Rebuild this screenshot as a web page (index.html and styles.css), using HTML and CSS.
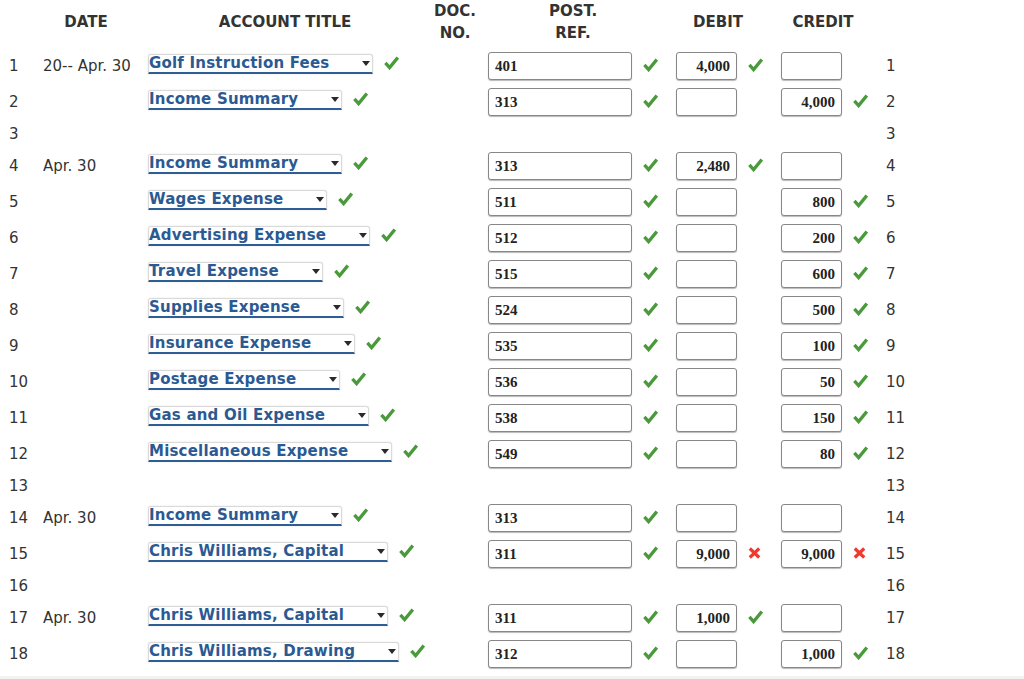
FILE: index.html
```html
<!DOCTYPE html>
<html>
<head>
<meta charset="utf-8">
<link rel="stylesheet" href="styles.css">
</head>
<body>
<svg width="0" height="0" class="defs">
  <defs>
    <symbol id="ok" viewBox="0 0 15 14"><path d="M1.4 6.8 L5.6 11.6 L13.8 1.6" fill="none" stroke="#4a9a3c" stroke-width="3.3" stroke-linejoin="miter"/></symbol>
    <symbol id="no" viewBox="0 0 13 12"><path d="M1.8 1.5 L11.2 10.5 M11.2 1.5 L1.8 10.5" fill="none" stroke="#ee3a2f" stroke-width="3.2"/></symbol>
    <symbol id="arr" viewBox="0 0 8 5"><path d="M0 0 H8 L4 5 Z" fill="#2a2a2a"/></symbol>
  </defs>
</svg>
<div class="sheet">
  <div class="head">
    <div class="h"></div>
    <div class="h">DATE</div>
    <div class="h">ACCOUNT TITLE</div>
    <div class="h"><span>DOC.</span><span>NO.</span></div>
    <div class="h"><span>POST.</span><span>REF.</span></div>
    <div class="h">DEBIT</div>
    <div class="h">CREDIT</div>
  </div>

  <div class="row">
    <div class="num">1</div><div class="date">20-- Apr. 30</div>
    <div class="acct"><span class="sel">Golf Instruction Fees<svg class="arr"><use href="#arr"/></svg></span><svg class="ok"><use href="#ok"/></svg></div>
    <div></div>
    <div class="field"><input class="in ref" value="401" readonly><svg class="ok"><use href="#ok"/></svg></div>
    <div class="field"><input class="in amt" value="4,000" readonly><svg class="ok"><use href="#ok"/></svg></div>
    <div class="field"><input class="in amt" value="" readonly></div>
    <div class="rnum">1</div>
  </div>
  <div class="row">
    <div class="num">2</div><div class="date"></div>
    <div class="acct"><span class="sel">Income Summary<svg class="arr"><use href="#arr"/></svg></span><svg class="ok"><use href="#ok"/></svg></div>
    <div></div>
    <div class="field"><input class="in ref" value="313" readonly><svg class="ok"><use href="#ok"/></svg></div>
    <div class="field"><input class="in amt" value="" readonly></div>
    <div class="field"><input class="in amt" value="4,000" readonly><svg class="ok"><use href="#ok"/></svg></div>
    <div class="rnum">2</div>
  </div>
  <div class="row blank">
    <div class="num">3</div><div></div><div></div><div></div><div></div><div></div><div></div>
    <div class="rnum">3</div>
  </div>
  <div class="row">
    <div class="num">4</div><div class="date">Apr. 30</div>
    <div class="acct"><span class="sel">Income Summary<svg class="arr"><use href="#arr"/></svg></span><svg class="ok"><use href="#ok"/></svg></div>
    <div></div>
    <div class="field"><input class="in ref" value="313" readonly><svg class="ok"><use href="#ok"/></svg></div>
    <div class="field"><input class="in amt" value="2,480" readonly><svg class="ok"><use href="#ok"/></svg></div>
    <div class="field"><input class="in amt" value="" readonly></div>
    <div class="rnum">4</div>
  </div>
  <div class="row">
    <div class="num">5</div><div class="date"></div>
    <div class="acct"><span class="sel">Wages Expense<svg class="arr"><use href="#arr"/></svg></span><svg class="ok"><use href="#ok"/></svg></div>
    <div></div>
    <div class="field"><input class="in ref" value="511" readonly><svg class="ok"><use href="#ok"/></svg></div>
    <div class="field"><input class="in amt" value="" readonly></div>
    <div class="field"><input class="in amt" value="800" readonly><svg class="ok"><use href="#ok"/></svg></div>
    <div class="rnum">5</div>
  </div>
  <div class="row">
    <div class="num">6</div><div class="date"></div>
    <div class="acct"><span class="sel">Advertising Expense<svg class="arr"><use href="#arr"/></svg></span><svg class="ok"><use href="#ok"/></svg></div>
    <div></div>
    <div class="field"><input class="in ref" value="512" readonly><svg class="ok"><use href="#ok"/></svg></div>
    <div class="field"><input class="in amt" value="" readonly></div>
    <div class="field"><input class="in amt" value="200" readonly><svg class="ok"><use href="#ok"/></svg></div>
    <div class="rnum">6</div>
  </div>
  <div class="row">
    <div class="num">7</div><div class="date"></div>
    <div class="acct"><span class="sel">Travel Expense<svg class="arr"><use href="#arr"/></svg></span><svg class="ok"><use href="#ok"/></svg></div>
    <div></div>
    <div class="field"><input class="in ref" value="515" readonly><svg class="ok"><use href="#ok"/></svg></div>
    <div class="field"><input class="in amt" value="" readonly></div>
    <div class="field"><input class="in amt" value="600" readonly><svg class="ok"><use href="#ok"/></svg></div>
    <div class="rnum">7</div>
  </div>
  <div class="row">
    <div class="num">8</div><div class="date"></div>
    <div class="acct"><span class="sel">Supplies Expense<svg class="arr"><use href="#arr"/></svg></span><svg class="ok"><use href="#ok"/></svg></div>
    <div></div>
    <div class="field"><input class="in ref" value="524" readonly><svg class="ok"><use href="#ok"/></svg></div>
    <div class="field"><input class="in amt" value="" readonly></div>
    <div class="field"><input class="in amt" value="500" readonly><svg class="ok"><use href="#ok"/></svg></div>
    <div class="rnum">8</div>
  </div>
  <div class="row">
    <div class="num">9</div><div class="date"></div>
    <div class="acct"><span class="sel">Insurance Expense<svg class="arr"><use href="#arr"/></svg></span><svg class="ok"><use href="#ok"/></svg></div>
    <div></div>
    <div class="field"><input class="in ref" value="535" readonly><svg class="ok"><use href="#ok"/></svg></div>
    <div class="field"><input class="in amt" value="" readonly></div>
    <div class="field"><input class="in amt" value="100" readonly><svg class="ok"><use href="#ok"/></svg></div>
    <div class="rnum">9</div>
  </div>
  <div class="row">
    <div class="num">10</div><div class="date"></div>
    <div class="acct"><span class="sel">Postage Expense<svg class="arr"><use href="#arr"/></svg></span><svg class="ok"><use href="#ok"/></svg></div>
    <div></div>
    <div class="field"><input class="in ref" value="536" readonly><svg class="ok"><use href="#ok"/></svg></div>
    <div class="field"><input class="in amt" value="" readonly></div>
    <div class="field"><input class="in amt" value="50" readonly><svg class="ok"><use href="#ok"/></svg></div>
    <div class="rnum">10</div>
  </div>
  <div class="row">
    <div class="num">11</div><div class="date"></div>
    <div class="acct"><span class="sel">Gas and Oil Expense<svg class="arr"><use href="#arr"/></svg></span><svg class="ok"><use href="#ok"/></svg></div>
    <div></div>
    <div class="field"><input class="in ref" value="538" readonly><svg class="ok"><use href="#ok"/></svg></div>
    <div class="field"><input class="in amt" value="" readonly></div>
    <div class="field"><input class="in amt" value="150" readonly><svg class="ok"><use href="#ok"/></svg></div>
    <div class="rnum">11</div>
  </div>
  <div class="row">
    <div class="num">12</div><div class="date"></div>
    <div class="acct"><span class="sel">Miscellaneous Expense<svg class="arr"><use href="#arr"/></svg></span><svg class="ok"><use href="#ok"/></svg></div>
    <div></div>
    <div class="field"><input class="in ref" value="549" readonly><svg class="ok"><use href="#ok"/></svg></div>
    <div class="field"><input class="in amt" value="" readonly></div>
    <div class="field"><input class="in amt" value="80" readonly><svg class="ok"><use href="#ok"/></svg></div>
    <div class="rnum">12</div>
  </div>
  <div class="row blank">
    <div class="num">13</div><div></div><div></div><div></div><div></div><div></div><div></div>
    <div class="rnum">13</div>
  </div>
  <div class="row">
    <div class="num">14</div><div class="date">Apr. 30</div>
    <div class="acct"><span class="sel">Income Summary<svg class="arr"><use href="#arr"/></svg></span><svg class="ok"><use href="#ok"/></svg></div>
    <div></div>
    <div class="field"><input class="in ref" value="313" readonly><svg class="ok"><use href="#ok"/></svg></div>
    <div class="field"><input class="in amt" value="" readonly></div>
    <div class="field"><input class="in amt" value="" readonly></div>
    <div class="rnum">14</div>
  </div>
  <div class="row">
    <div class="num">15</div><div class="date"></div>
    <div class="acct"><span class="sel">Chris Williams, Capital<svg class="arr"><use href="#arr"/></svg></span><svg class="ok"><use href="#ok"/></svg></div>
    <div></div>
    <div class="field"><input class="in ref" value="311" readonly><svg class="ok"><use href="#ok"/></svg></div>
    <div class="field"><input class="in amt" value="9,000" readonly><svg class="no"><use href="#no"/></svg></div>
    <div class="field"><input class="in amt" value="9,000" readonly><svg class="no"><use href="#no"/></svg></div>
    <div class="rnum">15</div>
  </div>
  <div class="row blank">
    <div class="num">16</div><div></div><div></div><div></div><div></div><div></div><div></div>
    <div class="rnum">16</div>
  </div>
  <div class="row">
    <div class="num">17</div><div class="date">Apr. 30</div>
    <div class="acct"><span class="sel">Chris Williams, Capital<svg class="arr"><use href="#arr"/></svg></span><svg class="ok"><use href="#ok"/></svg></div>
    <div></div>
    <div class="field"><input class="in ref" value="311" readonly><svg class="ok"><use href="#ok"/></svg></div>
    <div class="field"><input class="in amt" value="1,000" readonly><svg class="ok"><use href="#ok"/></svg></div>
    <div class="field"><input class="in amt" value="" readonly></div>
    <div class="rnum">17</div>
  </div>
  <div class="row">
    <div class="num">18</div><div class="date"></div>
    <div class="acct"><span class="sel">Chris Williams, Drawing<svg class="arr"><use href="#arr"/></svg></span><svg class="ok"><use href="#ok"/></svg></div>
    <div></div>
    <div class="field"><input class="in ref" value="312" readonly><svg class="ok"><use href="#ok"/></svg></div>
    <div class="field"><input class="in amt" value="" readonly></div>
    <div class="field"><input class="in amt" value="1,000" readonly><svg class="ok"><use href="#ok"/></svg></div>
    <div class="rnum">18</div>
  </div>
  <div class="foot"></div>
</div>
</body>
</html>
```

FILE: styles.css
```css
html, body {
  margin: 0;
  padding: 0;
  background: #fff;
}
body {
  font-family: "DejaVu Sans", Verdana, sans-serif;
  color: #333;
  font-size: 15px;
}
.defs {
  position: absolute;
  width: 0;
  height: 0;
}
.sheet {
  width: 1024px;
}
.head {
  display: grid;
  grid-template-columns: 40px 92px 306px 34px 202px 88px 122px;
  height: 44px;
  margin-bottom: 4px;
  font-weight: bold;
  font-size: 15px;
  color: #333;
}
.head .h {
  display: flex;
  flex-direction: column;
  align-items: center;
  justify-content: center;
  line-height: 22px;
  white-space: nowrap;
}
.row {
  display: grid;
  grid-template-columns: 43px 105px 282px 58px 188px 105px 105px 1fr;
  height: 36px;
  align-items: center;
}
.row.blank {
  height: 28px;
}
.num {
  padding-left: 9px;
}
.date {
  white-space: nowrap;
}
.rnum {
  padding-left: 0;
}
.acct {
  display: flex;
  align-items: center;
  gap: 11px;
  padding-bottom: 4px;
}
.sel {
  display: inline-flex;
  align-items: center;
  gap: 33px;
  height: 17px;
  box-sizing: content-box;
  border: 1px solid #dadada;
  border-bottom: 2px solid #2e5e96;
  border-radius: 3px 3px 0 0;
  box-shadow: 0 0 2px rgba(0, 0, 0, 0.12);
  padding: 0 2px 0 0;
  color: #2b5a92;
  font-weight: bold;
  font-size: 15px;
  letter-spacing: 0.2px;
  line-height: 17px;
  white-space: nowrap;
}
.arr {
  width: 8px;
  height: 5px;
}
.field {
  display: flex;
  align-items: center;
  gap: 11px;
}
.ok {
  width: 15px;
  height: 14px;
  margin-bottom: 2px;
  flex: none;
}
.no {
  width: 13px;
  height: 12px;
  margin-bottom: 2px;
  flex: none;
}
.in {
  height: 28px;
  box-sizing: border-box;
  margin: 0;
  border: 1px solid #878787;
  border-radius: 3px;
  box-shadow: 0 1px 1px rgba(0, 0, 0, 0.28);
  background: #fff;
  font-family: "Liberation Serif", "Times New Roman", serif;
  font-weight: bold;
  font-size: 15px;
  color: #222;
  padding: 0 6px;
  outline: none;
}
.in.ref {
  width: 144px;
}
.in.amt {
  width: 61px;
  text-align: right;
}
.foot {
  margin-top: 4px;
  height: 10px;
  background: linear-gradient(#f3f3f3, #ececec);
}
```
